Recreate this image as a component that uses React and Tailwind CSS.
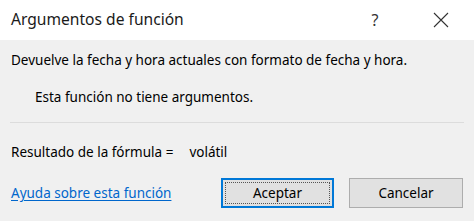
import React from 'react';

const App = () => {
  return (
    <div className="w-[474px] h-[221px] flex flex-col bg-[#f0f0f0] text-[#000] font-['Noto_Sans',sans-serif] overflow-hidden">
      {/* Title bar */}
      <div className="h-[40px] bg-white flex items-center pl-[11px] shrink-0">
        <span className="text-[15.6px] text-[#1a1a1a] flex-1">Argumentos de función</span>
        <span className="text-[16px] text-[#333] w-[14px] mr-[51px] text-center">?</span>
        <svg width="16" height="16" viewBox="0 0 16 16" className="mr-[25px]">
          <path d="M1 1 L15 15 M15 1 L1 15" stroke="#333" strokeWidth="1.1" fill="none" />
        </svg>
      </div>

      {/* Body */}
      <div className="flex flex-col px-[11px] text-[13.5px]">
        <p className="mt-[10px] leading-[20px]">Devuelve la fecha y hora actuales con formato de fecha y hora.</p>
        <p className="mt-[17px] pl-[24px] leading-[20px]">Esta función no tiene argumentos.</p>
        <div className="mt-[15px] h-px bg-[#dcdcdc] -mx-px" />
        <div className="mt-[19px] flex leading-[20px]">
          <span>Resultado de la fórmula =</span>
          <span className="ml-[16px]">volátil</span>
        </div>
        {/* Footer */}
        <div className="mt-[16px] flex items-center">
          <a href="#" className="text-[#0066cc] underline underline-offset-2 flex-1 leading-[20px]">Ayuda sobre esta función</a>
          <button className="w-[113px] h-[30px] border-2 border-[#0078d7] bg-[#e1e1e1] p-[2px] mr-[15px]">
            <span className="flex items-center justify-center w-full h-full border border-dotted border-[#555]">Aceptar</span>
          </button>
          <button className="w-[114px] h-[30px] border border-[#adadad] bg-[#e1e1e1]">Cancelar</button>
        </div>
      </div>
    </div>
  );
};

export default App;
